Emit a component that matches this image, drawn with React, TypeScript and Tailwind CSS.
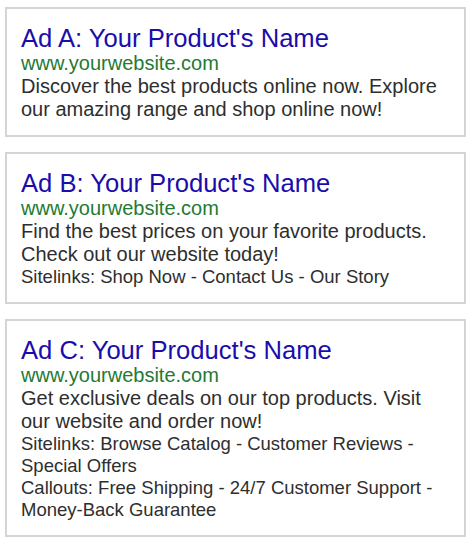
import React from 'react'

type Ad = {
  title: string
  url: string
  body: string
  extras: string[]
}

const ads: Ad[] = [
  {
    title: "Ad A: Your Product's Name",
    url: 'www.yourwebsite.com',
    body: 'Discover the best products online now. Explore our amazing range and shop online now!',
    extras: [],
  },
  {
    title: "Ad B: Your Product's Name",
    url: 'www.yourwebsite.com',
    body: 'Find the best prices on your favorite products. Check out our website today!',
    extras: ['Sitelinks: Shop Now - Contact Us - Our Story'],
  },
  {
    title: "Ad C: Your Product's Name",
    url: 'www.yourwebsite.com',
    body: 'Get exclusive deals on our top products. Visit our website and order now!',
    extras: [
      'Sitelinks: Browse Catalog - Customer Reviews - Special Offers',
      'Callouts: Free Shipping - 24/7 Customer Support - Money-Back Guarantee',
    ],
  },
]

function AdCard({ ad }: { ad: Ad }) {
  return (
    <div className="w-[461px] border-2 border-[#d4d4d4] bg-white pl-[14px] pr-[14px] py-[14.5px]">
      <div className="text-[25.6px] leading-[28px] text-[#1a0dab]">{ad.title}</div>
      <div className="text-[20px] leading-[23px] text-[#237a33]">{ad.url}</div>
      <div className="text-[20px] leading-[23px] text-[#2e2e2e]">{ad.body}</div>
      {ad.extras.map((line) => (
        <div key={line} className="text-[18.5px] leading-[22px] text-[#2e2e2e]">
          {line}
        </div>
      ))}
    </div>
  )
}

export default function App() {
  return (
    <div
      className="min-h-[545px] w-[474px] bg-white pl-[5px] pt-[7px] flex flex-col gap-[15px]"
      style={{ fontFamily: '"Liberation Sans", Arial, sans-serif' }}
    >
      {ads.map((ad) => (
        <AdCard key={ad.title} ad={ad} />
      ))}
    </div>
  )
}
